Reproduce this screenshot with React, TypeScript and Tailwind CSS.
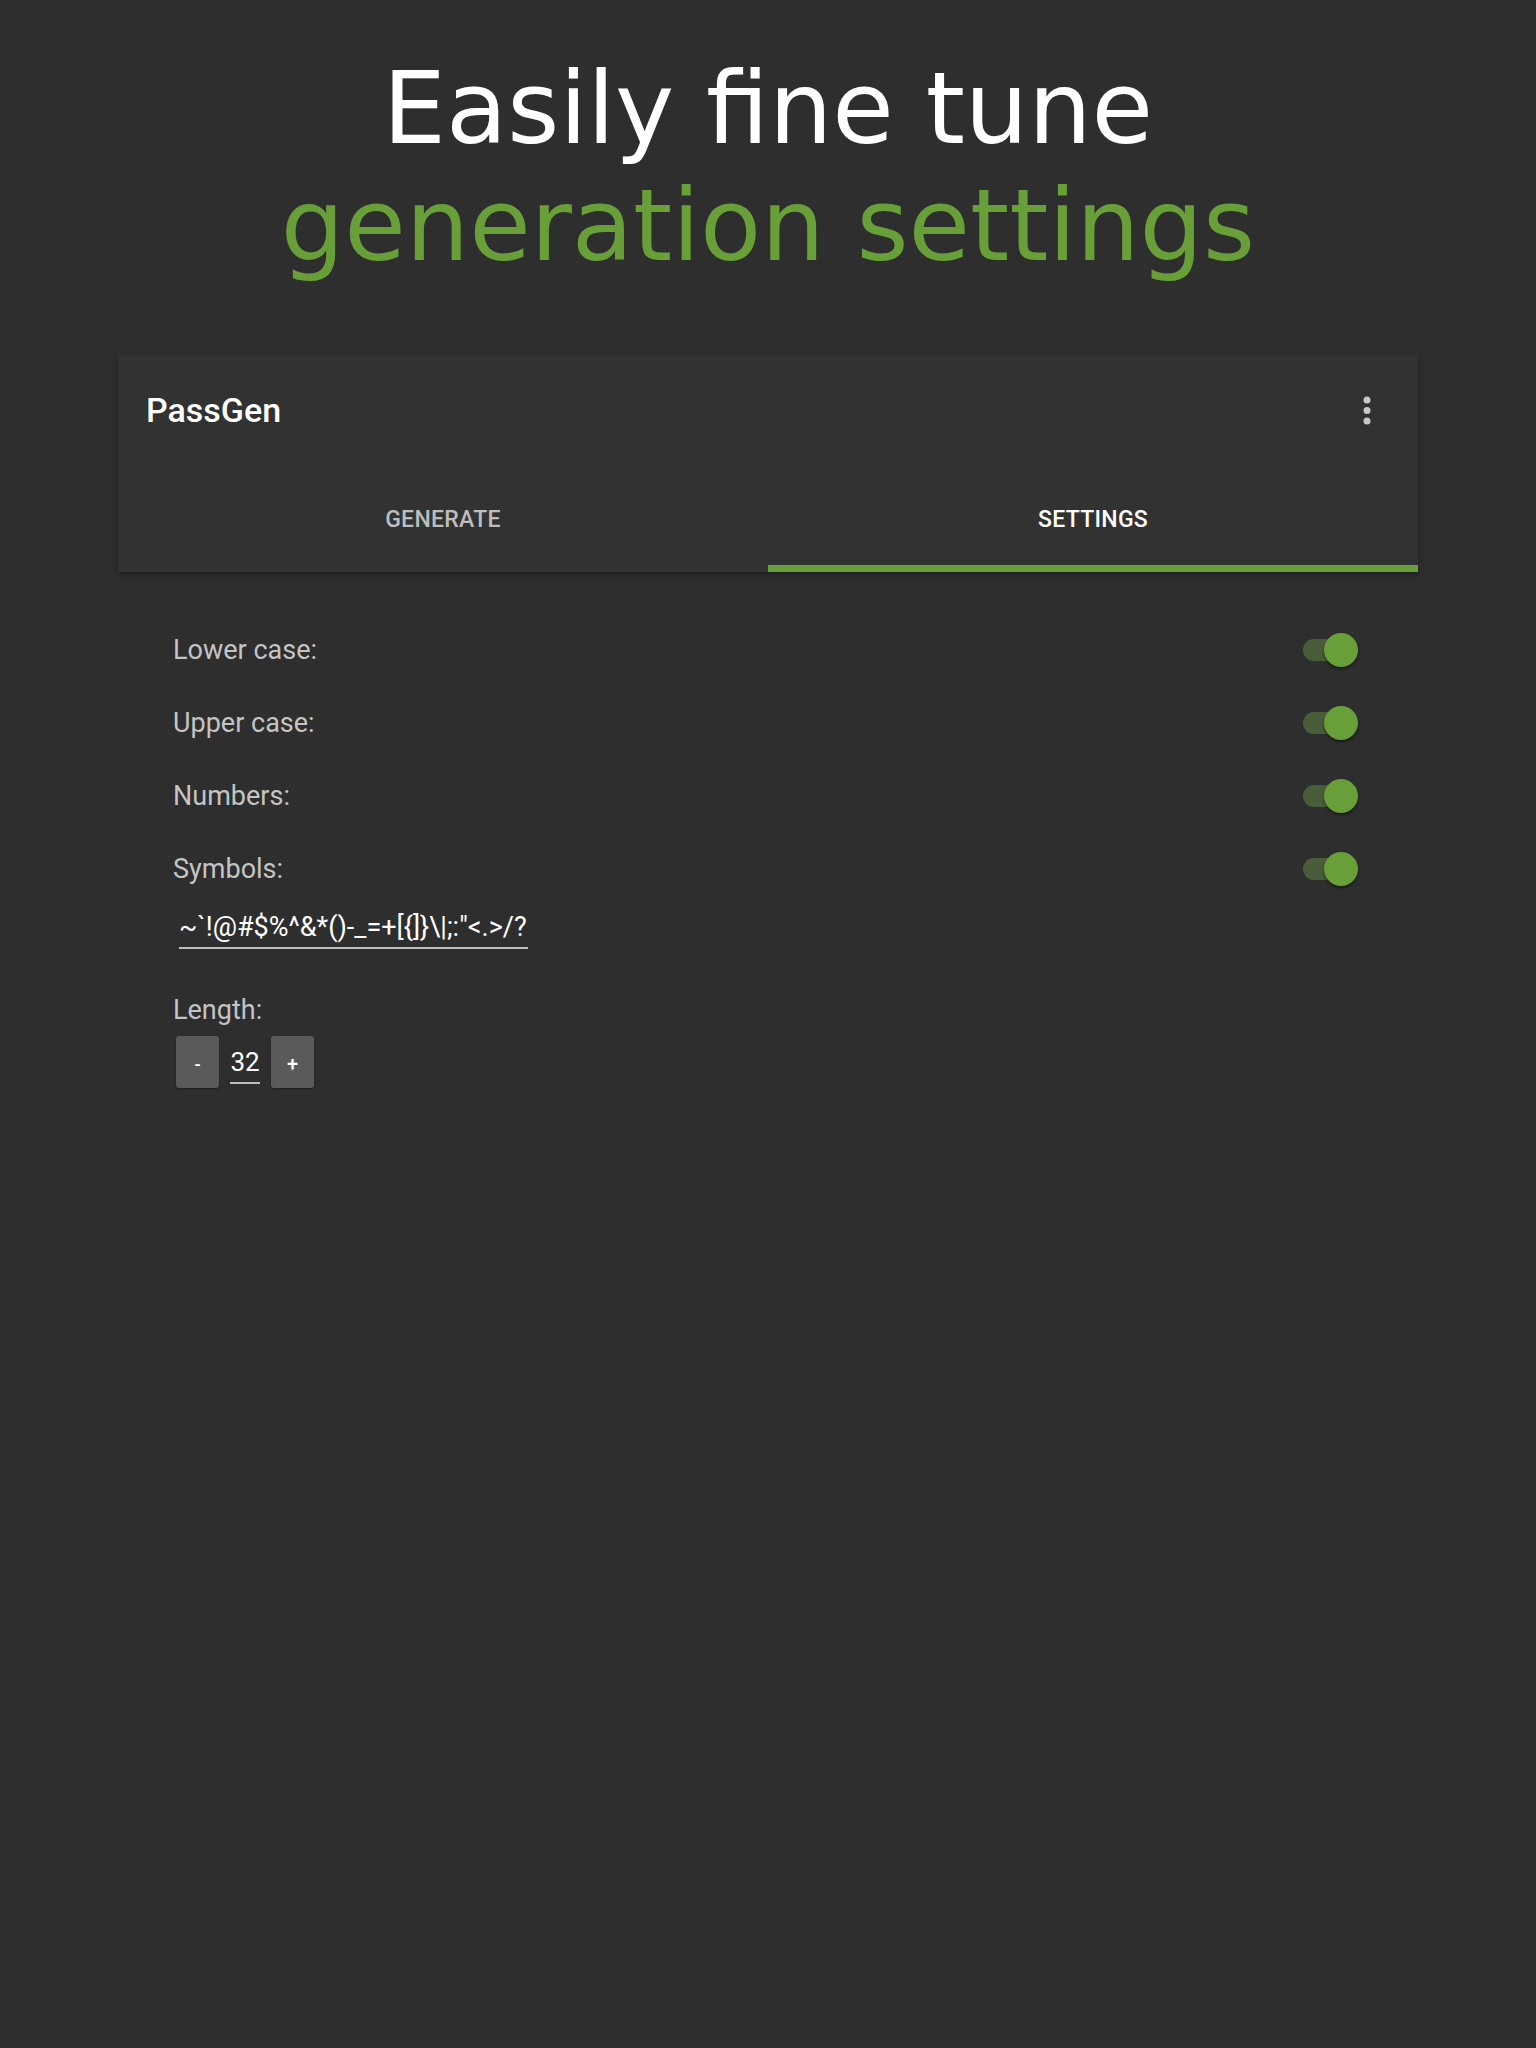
import React from "react";

const options = ["Lower case:", "Upper case:", "Numbers:", "Symbols:"];

function Toggle() {
  return (
    <div className="relative w-[55px] h-[34px]">
      <div className="absolute left-0 top-[6px] w-[48px] h-[22px] rounded-full bg-[#4a5d3a]" />
      <div className="absolute right-0 top-0 w-[34px] h-[34px] rounded-full bg-[#689f38] shadow-[0_2px_3px_rgba(0,0,0,0.45)]" />
    </div>
  );
}

export default function App() {
  return (
    <div className="w-full min-h-[2048px] bg-[#2e2e2e] font-['Roboto',sans-serif]">
      {/* Headline */}
      <div className="pt-[50px] text-center font-['DejaVu_Sans',sans-serif] text-[100px] leading-[117px]">
        <div className="text-white">Easily fine tune</div>
        <div className="text-[#689f38]">generation settings</div>
      </div>

      {/* App bar + tabs */}
      <div className="mx-[118px] mt-[71px] bg-[#323232] shadow-[0_3px_5px_rgba(0,0,0,0.3)]">
        <div className="h-[111px] flex items-center justify-between pl-[28px] pr-[47px]">
          <span className="text-[34px] font-medium text-white">PassGen</span>
          <svg width="8" height="30" viewBox="0 0 8 30" className="text-[#c8c8c8]">
            <circle cx="4" cy="4" r="3.5" fill="currentColor" />
            <circle cx="4" cy="14.5" r="3.5" fill="currentColor" />
            <circle cx="4" cy="25" r="3.5" fill="currentColor" />
          </svg>
        </div>
        <div className="flex h-[106px] pt-[2px]">
          <div className="flex-1 flex items-center justify-center text-[23px] font-medium text-[#bdbdbd] tracking-[0.3px]">
            GENERATE
          </div>
          <div className="flex-1 relative flex items-center justify-center text-[23px] font-medium text-white tracking-[0.3px]">
            SETTINGS
            <div className="absolute left-0 right-0 bottom-0 h-[7px] bg-[#689f38]" />
          </div>
        </div>
      </div>

      {/* Settings content */}
      <div className="mx-[118px] pl-[55px] pr-[60px] pt-[41px]">
        {options.map((label) => (
          <div key={label} className="h-[73px] flex items-center justify-between">
            <span className="text-[27px] leading-[30px] text-[#c4c4c4]">{label}</span>
            <Toggle />
          </div>
        ))}

        <div className="ml-[6px] w-[349px] pt-[7px] pb-[5px] border-b-2 border-[#bdbdbd] text-[27px] leading-[30px] text-white whitespace-nowrap">
          {"~`!@#$%^&*()-_=+[{]}\\|;:\"<.>/?"}
        </div>

        <div className="mt-[46px] text-[27px] leading-[30px] text-[#c4c4c4]">Length:</div>
        <div className="mt-[11px] flex items-start gap-[11px] ml-[3px]">
          <button className="w-[43px] h-[52px] rounded-[3px] bg-[#5a5a5a] text-white text-[18px] font-medium pt-[4px] shadow-[0_1px_2px_rgba(0,0,0,0.4)]">
            -
          </button>
          <div className="mt-[11px] w-[30px] pb-[5px] border-b-2 border-[#bdbdbd] text-center text-[26px] leading-[30px] text-white">
            32
          </div>
          <button className="w-[43px] h-[52px] rounded-[3px] bg-[#5a5a5a] text-white text-[20px] font-medium pt-[4px] shadow-[0_1px_2px_rgba(0,0,0,0.4)]">
            +
          </button>
        </div>
      </div>
    </div>
  );
}
